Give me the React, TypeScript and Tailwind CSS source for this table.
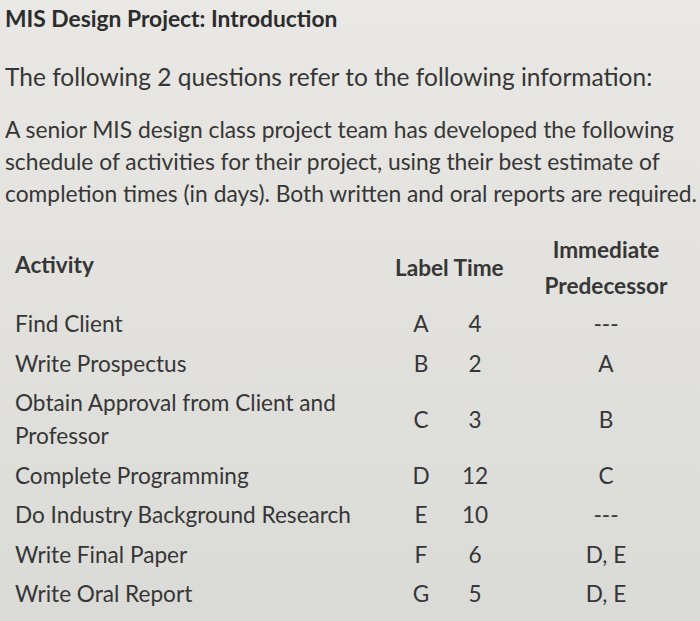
import React from "react";

const rows: { a: string[]; l: string; t: string; p: string }[] = [
  { a: ["Find Client"], l: "A", t: "4", p: "---" },
  { a: ["Write Prospectus"], l: "B", t: "2", p: "A" },
  { a: ["Obtain Approval from Client and", "Professor"], l: "C", t: "3", p: "B" },
  { a: ["Complete Programming"], l: "D", t: "12", p: "C" },
  { a: ["Do Industry Background Research"], l: "E", t: "10", p: "---" },
  { a: ["Write Final Paper"], l: "F", t: "6", p: "D, E" },
  { a: ["Write Oral Report"], l: "G", t: "5", p: "D, E" },
];

export default function App() {
  return (
    <div
      className="w-[700px] h-[621px] overflow-hidden bg-linear-to-b from-[#e9e8e4] to-[#dadad7] text-[#363636]"
      style={{ fontFamily: "Lato, 'Open Sans', sans-serif" }}
    >
      <div className="pl-[5px] pt-[4px] whitespace-nowrap">
        <h1 className="text-[22.8px] font-bold leading-[28px] text-[#2c2c2c]">MIS Design Project: Introduction</h1>
        <p className="mt-[30px] text-[24.5px] leading-[30px]">
          The following 2 questions refer to the following information:
        </p>
        <p className="mt-[21px] text-[22.8px] leading-[32px]">
          A senior MIS design class project team has developed the following
          <br />
          schedule of activities for their project, using their best estimate of
          <br />
          completion times (in days). Both written and oral reports are required.
        </p>
      </div>
      <div className="mt-[23px] pl-[15px] text-[22.6px] whitespace-nowrap">
        <div className="grid grid-cols-[380px_52px_56px_206px] items-center">
          <div className="font-bold pb-[6px]">Activity</div>
          <div className="col-span-2 font-bold text-center">Label Time</div>
          <div className="font-bold text-center leading-[36px]">
            Immediate
            <br />
            Predecessor
          </div>
        </div>
        <div className="flex flex-col">
          {rows.map((r, i) => (
            <div key={i} className="grid grid-cols-[380px_52px_56px_206px] items-center leading-[33px] py-[3.25px]">
              <div>
                {r.a.map((x, j) => (
                  <div key={j}>{x}</div>
                ))}
              </div>
              <div className="text-center">{r.l}</div>
              <div className="text-center">{r.t}</div>
              <div className="text-center">{r.p}</div>
            </div>
          ))}
        </div>
      </div>
    </div>
  );
}
